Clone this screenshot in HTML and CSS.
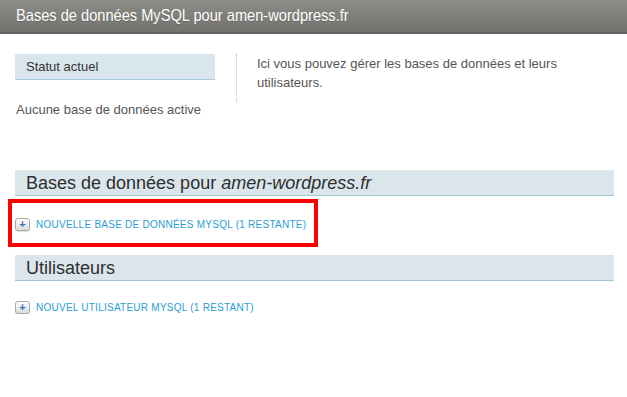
FILE: index.html
```html
<!DOCTYPE html>
<html lang="fr">
<head>
<meta charset="utf-8">
<title>Bases de données MySQL</title>
<link rel="stylesheet" href="styles.css">
</head>
<body>
<div class="header">
  <h1 class="header-title">Bases de données MySQL pour amen-wordpress.fr</h1>
</div>
<div class="content">
  <div class="intro">
    <div class="status">
      <div class="status-box">Statut actuel</div>
      <p class="status-text">Aucune base de données active</p>
    </div>
    <div class="intro-desc">
      <p>Ici vous pouvez gérer les bases de données et leurs utilisateurs.</p>
    </div>
  </div>

  <h2 class="section-title">Bases de données pour <em>amen-wordpress.fr</em></h2>
  <div class="highlight">
    <a class="add-link" href="#"><span class="plus-btn">+</span><span class="add-label">Nouvelle base de données MySQL (1 restante)</span></a>
  </div>

  <h2 class="section-title section-users">Utilisateurs</h2>
  <div class="link-row">
    <a class="add-link" href="#"><span class="plus-btn">+</span><span class="add-label">Nouvel utilisateur MySQL (1 restant)</span></a>
  </div>
</div>
</body>
</html>
```
FILE: styles.css
```css
* { box-sizing: border-box; }
body {
  margin: 0;
  background: #fff;
  font-family: "Liberation Sans", Arial, sans-serif;
  color: #555;
}
.header {
  height: 34px;
  background: linear-gradient(#8d8c88, #73726e);
  border-bottom: 2px solid #62615d;
  padding-left: 16px;
}
.header-title {
  display: inline-block;
  margin: 0;
  font-size: 17px;
  font-weight: normal;
  line-height: 32px;
  color: #fff;
  transform: scaleX(0.86);
  transform-origin: left center;
  white-space: nowrap;
  text-shadow: 0 1px 0 rgba(0,0,0,0.2);
}
.content {
  padding: 0 13px 0 15px;
}
.intro {
  display: flex;
  margin-top: 20px;
}
.status {
  width: 200px;
}
.status-box {
  height: 26px;
  background: #dae6ed;
  border-bottom: 1px solid #a7cbdd;
  padding-left: 11px;
  font-size: 13px;
  line-height: 26px;
  color: #333;
}
.status-text {
  margin: 22px 0 0 1px;
  font-size: 13px;
  line-height: 16px;
  color: #555;
}
.intro-desc {
  margin-left: 21px;
  height: 48px;
  border-left: 1px dotted #bbb;
  padding-left: 20px;
}
.intro-desc p {
  margin: 0;
  max-width: 320px;
  font-size: 13px;
  line-height: 19px;
  color: #555;
}
.section-title {
  margin: 52px 0 0 0;
  height: 26px;
  background: #dbe6ec;
  border-bottom: 1px solid #9fc7da;
  padding-left: 11px;
  font-size: 18px;
  font-weight: normal;
  line-height: 26px;
  color: #2e2e2e;
}
.section-title em { font-style: italic; }
.section-users { margin-top: 8px; }
.highlight {
  width: 310px;
  height: 48px;
  margin: 3px 0 0 -7px;
  border: 4px solid #ff0000;
  padding: 15px 0 0 3px;
}
.link-row {
  margin-top: 20px;
}
.add-link {
  display: flex;
  align-items: center;
  text-decoration: none;
}
.plus-btn {
  width: 15px;
  height: 13px;
  border: 1px solid #a9a9a9;
  border-radius: 3px;
  background: linear-gradient(#ffffff, #dcdcdc);
  box-shadow: 0 1px 1px rgba(0,0,0,0.15);
  color: #2a74bd;
  font-size: 11px;
  font-weight: bold;
  line-height: 10px;
  text-align: center;
}
.add-label {
  margin-left: 6px;
  font-size: 10px;
  letter-spacing: 0.25px;
  text-transform: uppercase;
  color: #2a9dd5;
}
```
